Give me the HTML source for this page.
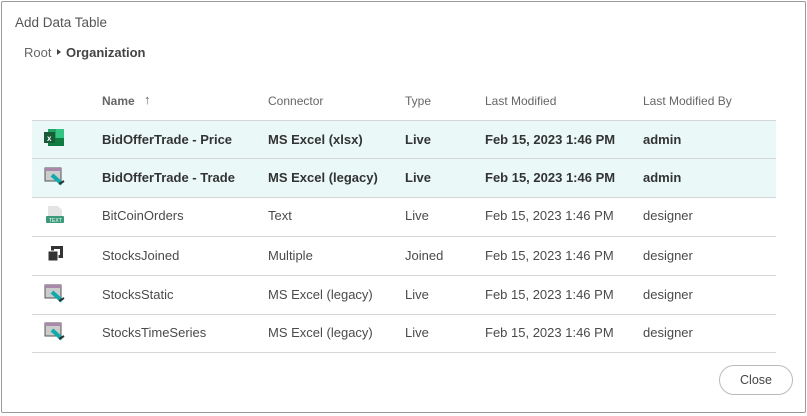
<!DOCTYPE html>
<html><head><style>
body{margin:0;width:807px;height:416px;background:#fff;font-family:"Liberation Sans",sans-serif;overflow:hidden;position:relative}
.frame{position:absolute;left:1px;top:1px;width:803px;height:410px;border:1px solid #9a9a9a;border-radius:2px}
.t{position:absolute;font-size:13px;color:#4a4a4a;white-space:nowrap}
.title{left:15px;top:15px;font-size:13.5px;color:#555}
.line{position:absolute;left:32px;width:744px;height:1px;background:#d6d6d6}
.hl{position:absolute;left:32px;width:744px;background:#eaf8f8}
.h{color:#666;font-weight:bold;font-size:12px}
.b{font-weight:bold;color:#333}
.btn{position:absolute;left:719px;top:365px;width:72px;height:28px;border:1px solid #bbb;border-radius:15px;font-size:12.5px;color:#444;text-align:center;line-height:28px}
</style></head><body>
<div class="frame"></div>
<div class="t title">Add Data Table</div>
<div class="t" style="left:24px;top:45px;color:#666">Root</div>
<div style="position:absolute;left:57px;top:49px;width:0;height:0;border-left:4px solid #444;border-top:3.5px solid transparent;border-bottom:3.5px solid transparent"></div>
<div class="t b" style="left:66px;top:45px;color:#444">Organization</div>

<div class="t h" style="left:102px;top:94px">Name</div>
<div class="t h" style="left:144px;top:92px;font-weight:normal;font-size:13px">↑</div>
<div class="t h" style="left:268px;top:94px;font-weight:normal">Connector</div>
<div class="t h" style="left:405px;top:94px;font-weight:normal">Type</div>
<div class="t h" style="left:485px;top:94px;font-weight:normal">Last Modified</div>
<div class="t h" style="left:643px;top:94px;font-weight:normal">Last Modified By</div>

<div class="hl" style="top:120px;height:77px"></div>
<div class="line" style="top:120px"></div>
<div class="line" style="top:158px"></div>
<div class="line" style="top:197px"></div>
<div class="line" style="top:236px"></div>
<div class="line" style="top:275px"></div>
<div class="line" style="top:314px"></div>
<div class="line" style="top:352px"></div>

<svg style="position:absolute;left:44px;top:129px" width="20" height="18"><rect x="4" y="0" width="16" height="17" fill="#21a366"/><rect x="12" y="0" width="8" height="17" fill="#33c481"/><rect x="4" y="9" width="16" height="8" fill="#107c41"/><rect x="0" y="3" width="11" height="11" fill="#185c37"/><text x="3" y="12" font-size="8" fill="#fff" font-family="Liberation Sans" font-weight="bold">x</text></svg>
<svg style="position:absolute;left:44px;top:167px" width="22" height="20"><rect x="1" y="1" width="16" height="13" fill="#ccc" stroke="#555"/><rect x="1" y="1" width="16" height="3" fill="#a8a"/><path d="M8 8 L18 17" stroke="#1aa" stroke-width="4"/><path d="M15 17 L20 14" stroke="#333" stroke-width="2"/></svg>
<svg style="position:absolute;left:45px;top:205px" width="20" height="20"><path d="M3 1 H13 L17 5 V18 H3 Z" fill="#e4e4e4"/><rect x="1" y="11" width="18" height="7" rx="1" fill="#3a9a7a"/><text x="4" y="17" font-size="5" fill="#fff" font-family="Liberation Sans">TEXT</text></svg>
<svg style="position:absolute;left:47px;top:246px" width="16" height="16"><rect x="5.5" y="1.5" width="9" height="9" fill="none" stroke="#333" stroke-width="3"/><rect x="1" y="5" width="10" height="10" fill="#333" stroke="#fff" stroke-width="1"/></svg>
<svg style="position:absolute;left:44px;top:284px" width="22" height="20"><rect x="1" y="1" width="16" height="13" fill="#ccc" stroke="#555"/><rect x="1" y="1" width="16" height="3" fill="#a8a"/><path d="M8 8 L18 17" stroke="#1aa" stroke-width="4"/><path d="M15 17 L20 14" stroke="#333" stroke-width="2"/></svg>
<svg style="position:absolute;left:44px;top:322px" width="22" height="20"><rect x="1" y="1" width="16" height="13" fill="#ccc" stroke="#555"/><rect x="1" y="1" width="16" height="3" fill="#a8a"/><path d="M8 8 L18 17" stroke="#1aa" stroke-width="4"/><path d="M15 17 L20 14" stroke="#333" stroke-width="2"/></svg>

<div class="t b" style="left:102px;top:132px">BidOfferTrade - Price</div>
<div class="t b" style="left:268px;top:132px">MS Excel (xlsx)</div>
<div class="t b" style="left:405px;top:132px">Live</div>
<div class="t b" style="left:485px;top:132px">Feb 15, 2023 1:46 PM</div>
<div class="t b" style="left:643px;top:132px">admin</div>

<div class="t b" style="left:102px;top:170px">BidOfferTrade - Trade</div>
<div class="t b" style="left:268px;top:170px">MS Excel (legacy)</div>
<div class="t b" style="left:405px;top:170px">Live</div>
<div class="t b" style="left:485px;top:170px">Feb 15, 2023 1:46 PM</div>
<div class="t b" style="left:643px;top:170px">admin</div>

<div class="t" style="left:102px;top:208px">BitCoinOrders</div>
<div class="t" style="left:268px;top:208px">Text</div>
<div class="t" style="left:405px;top:208px">Live</div>
<div class="t" style="left:485px;top:208px">Feb 15, 2023 1:46 PM</div>
<div class="t" style="left:643px;top:208px">designer</div>

<div class="t" style="left:102px;top:248px">StocksJoined</div>
<div class="t" style="left:268px;top:248px">Multiple</div>
<div class="t" style="left:405px;top:248px">Joined</div>
<div class="t" style="left:485px;top:248px">Feb 15, 2023 1:46 PM</div>
<div class="t" style="left:643px;top:248px">designer</div>

<div class="t" style="left:102px;top:287px">StocksStatic</div>
<div class="t" style="left:268px;top:287px">MS Excel (legacy)</div>
<div class="t" style="left:405px;top:287px">Live</div>
<div class="t" style="left:485px;top:287px">Feb 15, 2023 1:46 PM</div>
<div class="t" style="left:643px;top:287px">designer</div>

<div class="t" style="left:102px;top:325px">StocksTimeSeries</div>
<div class="t" style="left:268px;top:325px">MS Excel (legacy)</div>
<div class="t" style="left:405px;top:325px">Live</div>
<div class="t" style="left:485px;top:325px">Feb 15, 2023 1:46 PM</div>
<div class="t" style="left:643px;top:325px">designer</div>

<div class="btn">Close</div>
</body></html>
